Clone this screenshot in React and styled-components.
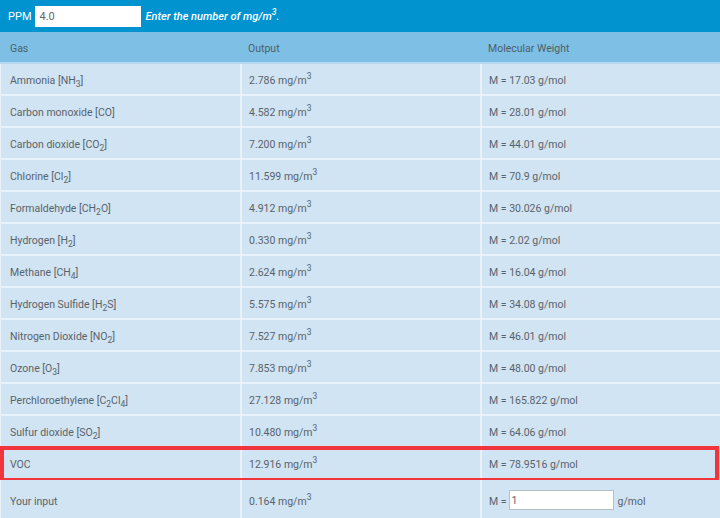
import React from 'react'
import styled, { createGlobalStyle } from 'styled-components'

const GlobalStyle = createGlobalStyle`
  body {
    margin: 0;
    background: #d1e4f3;
    font-family: Roboto, "Liberation Sans", sans-serif;
  }
`

const gases = [
  { name: <>Ammonia [NH<sub>3</sub>]</>, output: '2.786', weight: '17.03' },
  { name: <>Carbon monoxide [CO]</>, output: '4.582', weight: '28.01' },
  { name: <>Carbon dioxide [CO<sub>2</sub>]</>, output: '7.200', weight: '44.01' },
  { name: <>Chlorine [Cl<sub>2</sub>]</>, output: '11.599', weight: '70.9' },
  { name: <>Formaldehyde [CH<sub>2</sub>O]</>, output: '4.912', weight: '30.026' },
  { name: <>Hydrogen [H<sub>2</sub>]</>, output: '0.330', weight: '2.02' },
  { name: <>Methane [CH<sub>4</sub>]</>, output: '2.624', weight: '16.04' },
  { name: <>Hydrogen Sulfide [H<sub>2</sub>S]</>, output: '5.575', weight: '34.08' },
  { name: <>Nitrogen Dioxide [NO<sub>2</sub>]</>, output: '7.527', weight: '46.01' },
  { name: <>Ozone [O<sub>3</sub>]</>, output: '7.853', weight: '48.00' },
  { name: <>Perchloroethylene [C<sub>2</sub>Cl<sub>4</sub>]</>, output: '27.128', weight: '165.822' },
  { name: <>Sulfur dioxide [SO<sub>2</sub>]</>, output: '10.480', weight: '64.06' },
  { name: <>VOC</>, output: '12.916', weight: '78.9516', highlight: true },
]

const App = () => {
  return (
    <Wrapper>
      <GlobalStyle />
      <TopBar>
        <Label>PPM</Label>
        <PpmInput defaultValue="4.0" />
        <Hint>Enter the number of mg/m<sup>3</sup>.</Hint>
      </TopBar>
      <HeadRow>
        <HeadCell>Gas</HeadCell>
        <HeadCell>Output</HeadCell>
        <HeadCell>Molecular Weight</HeadCell>
      </HeadRow>
      {gases.map((gas, i) => (
        <Row key={i} $highlight={gas.highlight}>
          <Cell><span>{gas.name}</span></Cell>
          <Cell><span>{gas.output} mg/m<sup>3</sup></span></Cell>
          <Cell><span>M = {gas.weight} g/mol</span></Cell>
        </Row>
      ))}
      <Row $tall>
        <Cell><span>Your input</span></Cell>
        <Cell><span>0.164 mg/m<sup>3</sup></span></Cell>
        <Cell>
          <span>M =</span>
          <WeightInput defaultValue="1" />
          <span>g/mol</span>
        </Cell>
      </Row>
    </Wrapper>
  )
}

const Wrapper = styled.div`
  width: 720px;
  color: #59636a;
  font-size: 10.5px;
  sub {
    font-size: 8.5px;
    vertical-align: -3px;
    line-height: 0;
  }
  sup {
    font-size: 8.5px;
    vertical-align: 5px;
    line-height: 0;
  }
`

const TopBar = styled.div`
  height: 32px;
  background: #0093d0;
  display: flex;
  align-items: center;
  padding-left: 8px;
  color: #fff;
`

const Label = styled.span`
  font-size: 11px;
`

const PpmInput = styled.input`
  box-sizing: border-box;
  width: 106px;
  height: 21px;
  margin-left: 4px;
  border: none;
  padding: 0 4px;
  font: inherit;
  font-size: 11px;
  color: #666;
  outline: none;
`

const Hint = styled.span`
  margin-left: 4px;
  font-style: italic;
  font-weight: 500;
  font-size: 11px;
`

const HeadRow = styled.div`
  display: grid;
  grid-template-columns: 240px 240px 240px;
  height: 30px;
  background: #7ec0e5;
  border-bottom: 2px solid #b4d8ee;
`

const HeadCell = styled.div`
  display: flex;
  align-items: center;
  padding: 2px 0 0 10px;
  color: #4e5e66;
  & + & {
    padding-left: 8px;
  }
`

const Row = styled.div`
  position: relative;
  display: grid;
  grid-template-columns: 240px 240px 240px;
  height: ${(p) => (p.$tall ? '40px' : '30px')};
  background: #d1e4f3;
  border-bottom: 2px solid #e9f2f9;
  ${(p) =>
    p.$highlight &&
    `
    &::after {
      content: '';
      position: absolute;
      top: -2px;
      bottom: -4px;
      left: 0;
      right: 1px;
      border: 4px solid #f2353c;
    }
  `}
`

const Cell = styled.div`
  display: flex;
  align-items: center;
  padding: 2px 0 0 10px;
  white-space: nowrap;
  box-shadow: inset 1px 0 #e9f2f9;
  & + & {
    padding-left: 7px;
    box-shadow: none;
    border-left: 2px solid #e9f2f9;
  }
`

const WeightInput = styled.input`
  box-sizing: border-box;
  width: 105px;
  height: 20px;
  margin: -2px 4px 0 2px;
  border: 1px solid #b9bfc4;
  padding: 0 2px;
  font: inherit;
  color: #666;
  background: #fff;
`

export default App
